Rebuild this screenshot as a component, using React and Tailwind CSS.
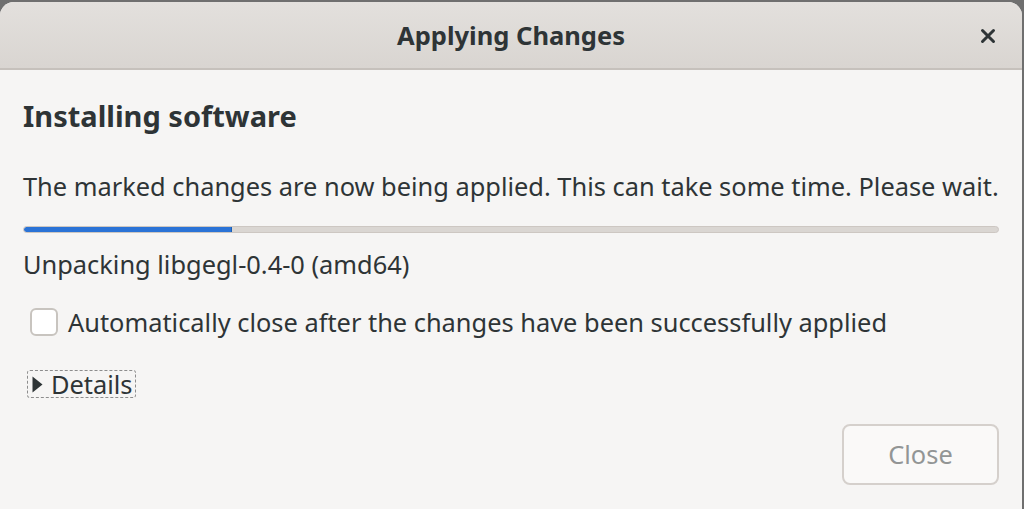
import { useState } from 'react';

const App = () => {
    const [autoClose, setAutoClose] = useState(false);

    return (
        <div className="w-[1024px] h-[509px] bg-[#6f6f6f] overflow-hidden" style={{ fontFamily: '"Noto Sans", "DejaVu Sans", sans-serif' }}>
            <div className="mt-[2px] w-[1022px] h-[507px] flex flex-col bg-[#f6f5f4] rounded-t-[14px] overflow-hidden">
                {/* Header bar */}
                <header className="h-[68px] shrink-0 relative flex items-center justify-center bg-gradient-to-b from-[#e3e0dd] to-[#d9d5d1] border-b-2 border-[#c6c1bc]">
                    <h1 className="text-[25.5px] font-bold text-[#2e3436]">Applying Changes</h1>
                    <button className="absolute right-[22px] top-[22px] w-6 h-6 flex items-center justify-center text-[#2e3436]">
                        <svg width="16" height="16" viewBox="0 0 16 16">
                            <path d="M2.5 2.5l11 11M13.5 2.5l-11 11" stroke="currentColor" strokeWidth="3" strokeLinecap="round" />
                        </svg>
                    </button>
                </header>

                {/* Body */}
                <main className="flex-1 flex flex-col px-[23px] text-[#2e3436]">
                    <h2 className="mt-[28px] text-[29px] font-bold leading-[36px]">Installing software</h2>
                    <p className="mt-[37px] text-[25.4px] leading-[30px] whitespace-nowrap">
                        The marked changes are now being applied. This can take some time. Please wait.
                    </p>
                    <div className="mt-[25px] h-[7px] w-[976px] rounded-full bg-[#dad6d2] border border-[#cdc7c2] overflow-hidden">
                        <div className="h-full w-[208px] bg-[#2b73d6] border-r border-[#1a5fb4] rounded-l-full" />
                    </div>
                    <p className="mt-[16px] text-[25.4px] leading-[30px]">Unpacking libgegl-0.4-0 (amd64)</p>

                    <label className="mt-[28px] ml-[7px] flex items-center gap-[10px] cursor-pointer">
                        <span
                            onClick={() => setAutoClose(!autoClose)}
                            className="w-[28px] h-[28px] rounded-[6px] border-2 border-[#c8c4bf] bg-white flex items-center justify-center"
                        >
                            {autoClose && (
                                <svg width="16" height="16" viewBox="0 0 16 16">
                                    <path d="M3 8l3.5 3.5L13 4" stroke="#2e3436" strokeWidth="2.5" fill="none" />
                                </svg>
                            )}
                        </span>
                        <span className="text-[25.4px] leading-[30px] whitespace-nowrap">Automatically close after the changes have been successfully applied</span>
                    </label>

                    <div className="mt-[33px] ml-[4px] w-[109px] h-[28px] flex items-center gap-[8px] pl-[4px] border border-dashed border-[#8d8d8d] rounded-[3px]">
                        <svg width="11" height="17" viewBox="0 0 11 17">
                            <path d="M0.5 0.5l10 8-10 8z" fill="#2e3436" />
                        </svg>
                        <span className="text-[25.4px] leading-[26px]">Details</span>
                    </div>

                    <div className="mt-auto mb-[24px] flex justify-end">
                        <button className="w-[157px] h-[61px] rounded-[8px] border-2 border-[#d5d0cc] bg-[#faf9f8] text-[25.4px] text-[#929595]">
                            Close
                        </button>
                    </div>
                </main>
            </div>
        </div>
    );
};

export default App;
